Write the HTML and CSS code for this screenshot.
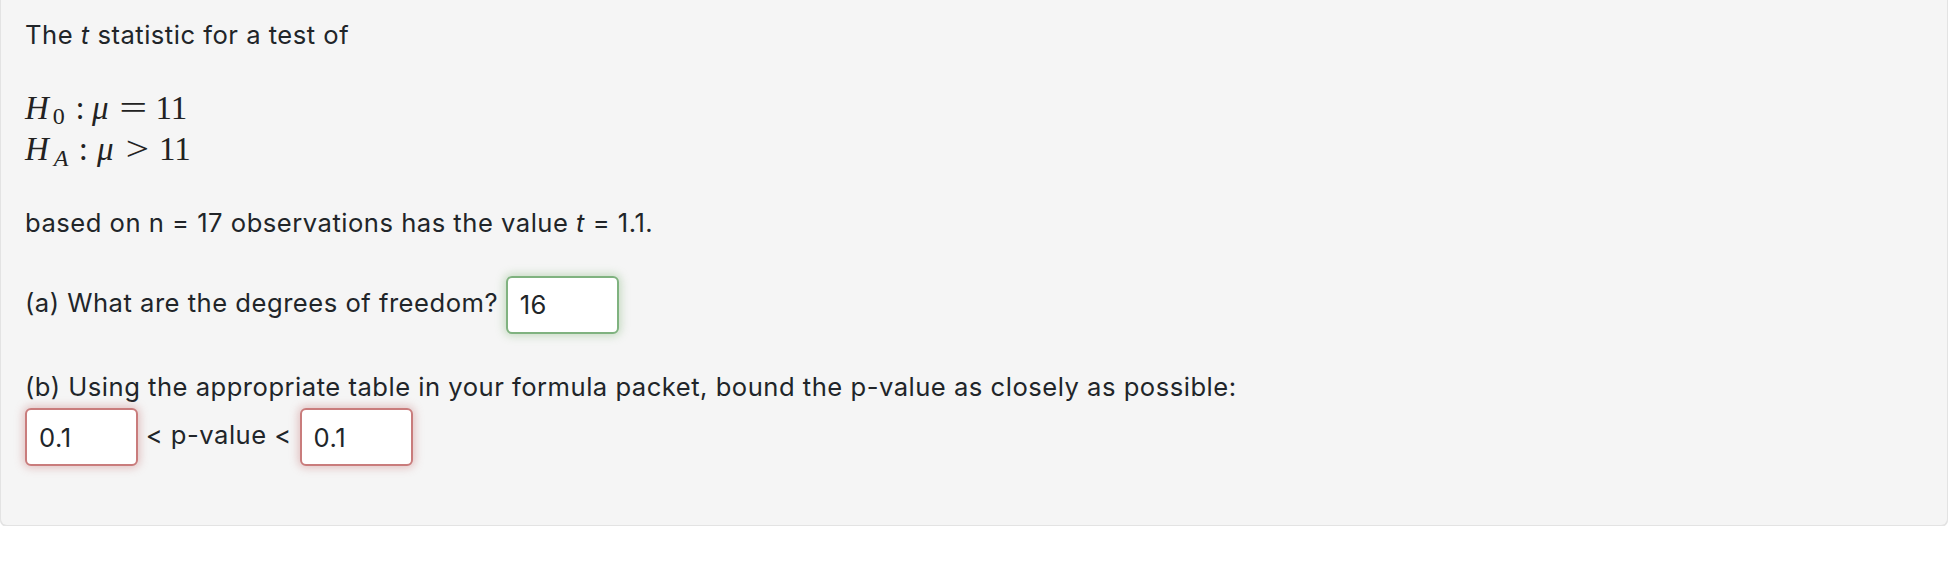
FILE: index.html
```html
<!DOCTYPE html>
<html lang="en">
<head>
<meta charset="utf-8">
<title>t statistic problem</title>
<link rel="stylesheet" href="styles.css">
</head>
<body>
<div class="card">
  <p class="line first">The <i>t</i> statistic for a test of</p>
  <div class="math">
    <div class="mrow">
      <span class="mi">H</span><span class="sub s0">0</span><span class="op colon c1">:</span><span class="mi mu m1">μ</span><span class="rel eq"><span>=</span></span><span class="num n1">11</span>
    </div>
    <div class="mrow">
      <span class="mi">H</span><span class="sub sa"><i>A</i></span><span class="op colon c2">:</span><span class="mi mu m2">μ</span><span class="rel gt"><span>&gt;</span></span><span class="num n2">11</span>
    </div>
  </div>
  <p class="line">based on n = 17 observations has the value <i>t</i> = 1.1.</p>
  <p class="line qa">(a) What are the degrees of freedom? <input class="ans correct" type="text" value="16" readonly></p>
  <div class="qb">
    <p class="line">(b) Using the appropriate table in your formula packet, bound the p-value as closely as possible:</p>
    <div class="line pair"><input class="ans incorrect" type="text" value="0.1" readonly> &lt; p-value &lt; <input class="ans incorrect" type="text" value="0.1" readonly></div>
  </div>
</div>
</body>
</html>
```

FILE: styles.css
```css
html, body {
  margin: 0;
  padding: 0;
  background: #ffffff;
}

body {
  font-family: Inter, "Noto Sans", "Liberation Sans", sans-serif;
  font-size: 25.6px;
  letter-spacing: 0.5px;
  color: #212529;
}

.card {
  width: 1948px;
  box-sizing: border-box;
  background: #f5f5f5;
  border: 1px solid #e3e3e3;
  border-top: 0;
  border-radius: 0 0 7px 7px;
  box-shadow: 0 1px 0 #e4e4e4;
  padding: 16px 24px 59px 24px;
}

.line {
  margin: 0;
  line-height: 38.4px;
}

.math {
  margin: 34px 0 34px 0;
  font-family: "Liberation Serif", "Times New Roman", serif;
  font-size: 33px;
  letter-spacing: 0;
  color: #222;
}

.mrow {
  display: flex;
  align-items: baseline;
  line-height: 41px;
  height: 41px;
}

.mi { font-style: italic; }

.sub {
  font-size: 24px;
  position: relative;
}
.s0 { margin-left: 4px; top: 5px; }
.sa { margin-left: 5px; top: 6px; }

.c1 { margin-left: 10.7px; }
.c2 { margin-left: 10.3px; }
.m1 { margin-left: 7.3px; }
.m2 { margin-left: 9px; }

.rel {
  display: inline-block;
  text-align: center;
}
.rel span { display: inline-block; }
.eq { width: 25px; margin-left: 12.5px; }
.eq span { transform: scaleX(1.5); }
.gt { width: 20px; margin-left: 14.2px; }
.gt span { transform: scaleX(1.25); }

.n1 { margin-left: 9.3px; }
.n2 { margin-left: 11.3px; }

.qa {
  margin-top: 33px;
}

.qb {
  margin-top: 34px;
}

.pair {
  margin-top: 2px;
}

.ans {
  box-sizing: border-box;
  width: 113px;
  height: 58px;
  padding: 0 12px;
  margin: 0;
  font-family: Inter, "Noto Sans", "Liberation Sans", sans-serif;
  font-size: 25.6px;
  letter-spacing: 0.5px;
  color: #212529;
  background: #ffffff;
  border: 2px solid #ccc;
  border-radius: 6px;
  vertical-align: -3px;
  outline: none;
}

.correct {
  border-color: #7fb27f;
  box-shadow: 0 0 9px 2px rgba(120, 175, 110, 0.38);
}

.incorrect {
  border-color: #c97c7c;
  box-shadow: 0 0 9px 2px rgba(195, 110, 110, 0.38);
}
```
